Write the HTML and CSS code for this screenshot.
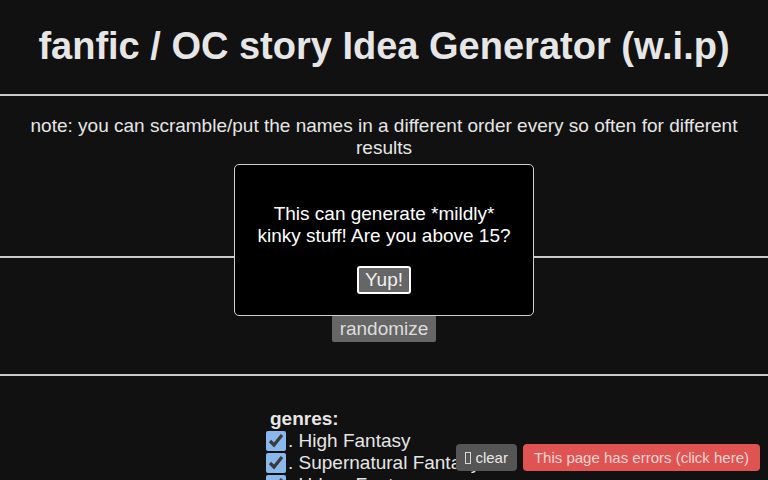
FILE: index.html
```html
<!DOCTYPE html>
<html>
    <head>
        <meta charset="utf-8">
        <link rel="stylesheet" href="styles.css">
    </head>
    <body>
        <div id="page">
            <h1 class="title">fanfic / OC story Idea Generator (w.i.p)</h1>
            <hr class="rule">
            <p class="note">note: you can scramble/put the names in a different order every so often for different results</p>
            <hr class="rule">
            <div class="output-section">
                <button class="btn-randomize">randomize</button>
            </div>
            <hr class="rule">
            <div class="genres">
                <div class="genres-title">genres:</div>
                <label class="genre"><input type="checkbox" checked>. High Fantasy</label>
                <label class="genre"><input type="checkbox" checked>. Supernatural Fantasy</label>
                <label class="genre"><input type="checkbox" checked>. Urban Fantasy</label>
            </div>
        </div>

        <div class="modal">
            <p class="modal-text">This can generate *mildly* kinky stuff! Are you above 15?</p>
            <button class="btn-yup">Yup!</button>
        </div>

        <div class="err-bar">
            <button class="btn-clear"><span class="tofu"></span> clear</button>
            <button class="btn-errors">This page has errors (click here)</button>
        </div>
    </body>
</html>
```
FILE: styles.css
```css
html,
body {
    margin: 0;
    padding: 0;
    background: #111111;
    color: #e6e6e6;
    height: 100%;
    overflow: hidden;
}

#page {
    font-family: "Liberation Sans", Arial, sans-serif;
    text-align: center;
}

.title {
    margin: 0;
    padding: 24px 0 0;
    height: 70px;
    font-size: 38px;
    font-weight: bold;
    line-height: 44px;
}

.rule {
    margin: 0;
    border: 0;
    height: 2px;
    background: #c8c8c8;
}

.note {
    margin: 0;
    padding: 19px 30px 0;
    height: 141px;
    font-size: 19px;
    line-height: 22px;
}

.output-section {
    height: 116px;
    display: flex;
    flex-direction: column;
    justify-content: flex-end;
    align-items: center;
}

.btn-randomize {
    font-family: inherit;
    font-size: 19px;
    color: #dddddd;
    background: #666666;
    border: 0;
    border-radius: 2px;
    padding: 0 8px;
    height: 27px;
    margin-bottom: 32px;
}

.genres {
    width: 240px;
    margin: 32px auto 0;
    padding-left: 4px;
    text-align: left;
    font-size: 19px;
    line-height: 22px;
}

.genres-title {
    font-weight: bold;
    padding-left: 4px;
}

.genre {
    display: flex;
    align-items: center;
    white-space: nowrap;
}

.genre input {
    margin: 0 2px 0 0;
    width: 20px;
    height: 20px;
    accent-color: #8ab8ec;
}

.modal {
    position: fixed;
    top: 164px;
    left: 234px;
    width: 298px;
    height: 150px;
    background: #000000;
    border: 1px solid #d0d0d0;
    border-radius: 5px;
    font-family: "Liberation Sans", Arial, sans-serif;
    text-align: center;
    color: #ffffff;
}

.modal-text {
    margin: 38px 20px 0;
    font-size: 19px;
    line-height: 22px;
}

.btn-yup {
    margin-top: 19px;
    font-family: inherit;
    font-size: 19px;
    color: #f0f0f0;
    background: #666666;
    border: 2px solid #ffffff;
    border-radius: 3px;
    padding: 0 6px;
    height: 28px;
}

.err-bar {
    position: fixed;
    right: 8px;
    bottom: 9px;
    display: flex;
    gap: 6px;
    font-family: "Liberation Sans", Arial, sans-serif;
}

.btn-clear,
.btn-errors {
    font-family: inherit;
    font-size: 15px;
    height: 27px;
    border: 0;
    border-radius: 4px;
}

.btn-clear {
    padding: 0 9px 0 9px;
    background: #555555;
    color: #e8e8e8;
}

.tofu {
    display: inline-block;
    width: 4px;
    height: 10px;
    border: 1px solid #d8d8d8;
    vertical-align: -1px;
}

.btn-errors {
    padding: 0 11px;
    background: #e05353;
    color: #f8d6d6;
}
```
